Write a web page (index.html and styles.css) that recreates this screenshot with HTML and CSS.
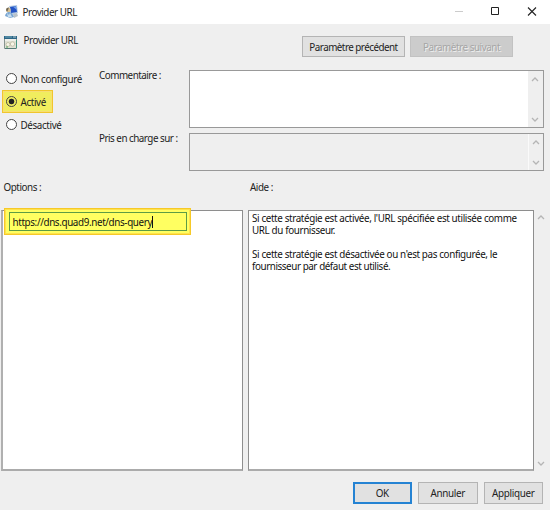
FILE: index.html
```html
<!DOCTYPE html>
<html lang="fr">
<head>
<meta charset="utf-8">
<title>Provider URL</title>
<link rel="stylesheet" href="styles.css">
</head>
<body>
<div class="window">
  <header class="titlebar">
    <svg class="app-icon" viewBox="0 0 14 14"><path d="M4 1l8-1 1 8-7 2z" fill="#b7cce3"/><path d="M5 2l6-1 1 6-6 1z" fill="#2453c4"/><path d="M8 1.700l3-.5.6 3.500z" fill="#6f9fea"/><path d="M8 9l4-1 1 3-4 2z" fill="#b9c2c9"/><circle cx="3.500" cy="5" r="2.300" fill="#d8c193"/><path d="M1 5q0-3 3-2.500L3 5 2 7z" fill="#6f6755"/><path d="M0 11q1-4 4-4t5 5l-4 1z" fill="#78a5d2"/><path d="M2 8l2 2 1-2 2 4-4 .5z" fill="#c7ddee"/></svg>
    <span class="caption">Provider URL</span>
    <svg class="controls" viewBox="0 0 88 24"><path d="M0 11.500h8" stroke="#ccc"/><path d="M36.500 7.500h7v7h-7z" fill="none" stroke="#222"/><path d="M73 7.500l8 8M81 7.500l-8 8" stroke="#222" stroke-width="1.100"/></svg>
  </header>

  <section class="heading">
    <svg class="policy-icon" viewBox="0 0 14 14"><path d="M.5 1.500h12v12H.5z" fill="#dfe1d5" stroke="#87948f"/><path d="M0 1h13v3H0z" fill="#2d6687"/><path d="M1 2h7" stroke="#75a9bd"/><path d="M9 2h3" stroke="#b9ccd0"/><path d="M1 5h11" stroke="#fff"/><circle cx="4" cy="9.500" r="2" fill="#f6f5e7" stroke="#b4b299" stroke-width=".7"/><circle cx="8.500" cy="9" r="2.200" fill="#f6f5e7" stroke="#b4b299" stroke-width=".7"/><path d="M1 13.500h11" stroke="#557b78"/><path d="M12.500 5v8" stroke="#469582"/><path d="M2 12h2" stroke="#55a45d"/></svg>
    <span class="name">Provider URL</span>
    <button class="btn prev"><span>Paramètre précédent</span></button>
    <button class="btn next" disabled><span>Paramètre suivant</span></button>
  </section>

  <section class="state">
    <div class="radios">
      <label class="radio"><i></i><span>Non configuré</span></label>
      <label class="radio on"><i></i><span>Activé</span></label>
      <label class="radio"><i></i><span>Désactivé</span></label>
    </div>
    <div class="labels">
      <span>Commentaire :</span>
      <span>Pris en charge sur :</span>
    </div>
    <div class="fields">
      <div class="field comment"><div class="scroll"><svg viewBox="0 0 8 5"><path d="M1 4l3-3 3 3"/></svg><svg viewBox="0 0 8 5"><path d="M1 1l3 3 3-3"/></svg></div></div>
      <div class="field support"><div class="scroll"><svg viewBox="0 0 8 5"><path d="M1 4l3-3 3 3"/></svg><svg viewBox="0 0 8 5"><path d="M1 1l3 3 3-3"/></svg></div></div>
    </div>
  </section>

  <section class="pane-labels"><span>Options :</span><span>Aide :</span></section>

  <main class="panes">
    <div class="pane options">
      <div class="mark"><div class="input"><span>https://dns.quad9.net/dns-query</span><b class="caret"></b></div></div>
    </div>
    <div class="pane help">
      <p><span>Si cette stratégie est activée, l'URL spécifiée est utilisée comme</span><span>URL du fournisseur.</span></p>
      <p><span>Si cette stratégie est désactivée ou n'est pas configurée, le</span><span class="tight">fournisseur par défaut est utilisé.</span></p>
    </div>
    <div class="scroll outer"><svg viewBox="0 0 8 5"><path d="M1 4l3-3 3 3"/></svg><svg viewBox="0 0 8 5"><path d="M1 1l3 3 3-3"/></svg></div>
  </main>

  <footer class="actions">
    <button class="btn ok"><span>OK</span></button>
    <button class="btn"><span>Annuler</span></button>
    <button class="btn"><span>Appliquer</span></button>
  </footer>
</div>
</body>
</html>
```
FILE: styles.css
```css
* { box-sizing: border-box; }
body { margin: 0; }
.window {
  width: 550px; height: 510px; overflow: hidden;
  background: #efefef; color: #222;
  font: 9.850px/12px "Noto Sans", "Open Sans", sans-serif;
  letter-spacing: -0.45px; white-space: nowrap;
}
svg { display: block; flex: none; }
.titlebar { display: flex; align-items: center; height: 24px; padding-left: 5px; background: #fff; }
.app-icon { width: 14px; height: 14px; margin-right: 3.500px; }
.controls { width: 88px; height: 24px; margin-left: auto; margin-right: 7px; }
.heading { display: flex; height: 46px; padding: 12px 37px 0 4px; }
.policy-icon { width: 14px; height: 14px; margin: -1px 5.500px 0 0; }
.name { margin-top: -2px; }
.btn {
  display: flex; align-items: center; justify-content: center;
  height: 21px; margin: 0; padding: 0; border: 1px solid #b4b4b4; border-radius: 0;
  background: #e1e1e1; color: #222; font: inherit; letter-spacing: inherit;
}
.prev { width: 103px; margin-left: auto; letter-spacing: -0.52px; }
.next { width: 103px; margin-left: 5px; background: #ccc; border-color: #c2c2c2; color: #a6a6a6; text-shadow: 1px 1px 0 #eee; }
.state { display: grid; grid-template-columns: 99px 90px 355px; height: 101px; }
.radios { padding: 0 0 0 2px; margin-top: -3px; letter-spacing: -0.38px; }
.radio { display: flex; align-items: center; width: 96px; height: 23px; padding-left: 4px; }
.radio i { width: 11px; height: 11px; margin-right: 3.500px; border: 1px solid #444; border-radius: 50%; background: #fff; }
.radio.on { width: 51px; padding-left: 3px; border: 1px solid #f0c62c; outline: 1px solid #f7de72; outline-offset: -2px; background: #f0ed5e; }
.radio.on i { background: radial-gradient(circle, #222 0 2.500px, #f0ed5e 3.200px); }
.labels { display: flex; flex-direction: column; gap: 51px; margin-top: -1px; letter-spacing: -0.5px; }
.fields { display: flex; flex-direction: column; gap: 5px; }
.field { display: flex; justify-content: flex-end; border: 1px solid #999; }
.comment { height: 58px; background: #fff; }
.support { height: 38px; background: #efefef; }
.support .scroll { border-left: 1px solid #fafafa; }
.scroll { display: flex; flex-direction: column; justify-content: space-between; align-items: center; width: 15px; padding: 6px 1px 5px 0; background: #efefef; }
.scroll svg { width: 8px; height: 5px; fill: none; stroke: #b5b5b5; stroke-width: 1.300; }
.pane-labels { display: grid; grid-template-columns: 246.500px 1fr; height: 39px; padding: 10px 0 0 3.500px; }
.panes { display: flex; height: 261px; padding-left: 1px; }
.pane { border: 1px solid #8e8e8e; background: #fff; color: #111; letter-spacing: -0.37px; }
.options { width: 242px; padding-left: 1px; border-left: 2px solid #b0b0b0; border-bottom: 2px solid #ababab; }
.mark { position: relative; width: 187px; height: 27px; margin-top: -3px; padding: 3px 3px 3px 4px; border: 1px solid #f6c928; outline: 1px solid #ffe24c; outline-offset: -2px; background: #ffff61; }
.input { display: flex; align-items: center; height: 19px; padding-left: 2.500px; border: 1px solid #5c9c45; }
.caret { width: 1px; height: 12px; background: #111; }
.help { width: 286px; margin-left: 5px; padding: 1px 3px; border-bottom: 2px solid #ababab; }
.help p { margin: 0 0 12px; }
.help span { display: block; line-height: 12px; }
.help .tight { letter-spacing: -0.43px; }
.outer { width: 12px; margin-left: 1px; padding: 5px 0; }
.actions { display: flex; gap: 6px; justify-content: flex-end; padding: 11px 7px 0 0; letter-spacing: -0.3px; }
.actions .btn { width: 59.500px; height: 22px; }
.actions .ok { border: 2px solid #2583d3; }
```
